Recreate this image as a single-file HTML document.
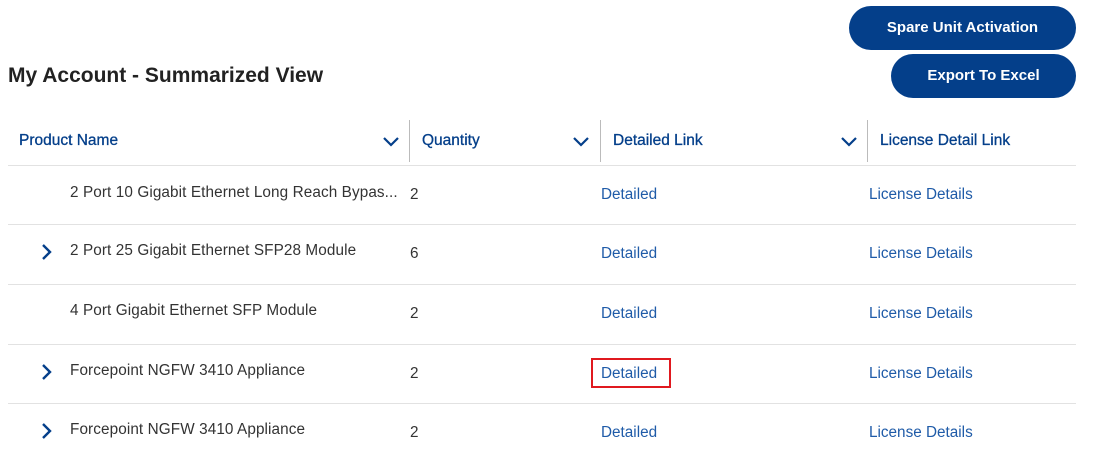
<!DOCTYPE html>
<html><head><style>
body{margin:0;width:1093px;height:459px;background:#fff;font-family:"Liberation Sans",sans-serif;position:relative;overflow:hidden}
.a{position:absolute;white-space:nowrap}
.btn{position:absolute;background:#043f8a;color:#fff;font-weight:bold;font-size:15px;border-radius:22px;text-align:center;line-height:44px;height:44px}
h1{position:absolute;left:8px;top:64px;margin:0;font-size:21px;font-weight:bold;color:#222}
.hd{font-size:15.5px;color:#043f8a;top:132px;-webkit-text-stroke:0.3px #043f8a}
.vl{position:absolute;top:120px;width:1px;height:42px;background:#bbb}
.hl{position:absolute;left:8px;width:1068px;height:1px;background:#e2e2e2}
.t{font-size:15.3px;color:#333}
.l{font-size:15.3px;color:#1f5ba8}
svg{position:absolute}
</style></head><body>
<div class="btn" style="left:849px;top:6px;width:227px">Spare Unit Activation</div>
<div class="btn" style="left:891px;top:54px;width:185px">Export To Excel</div>
<h1>My Account - Summarized View</h1>
<div class="a hd" style="left:19px">Product Name</div>
<div class="a hd" style="left:422px">Quantity</div>
<div class="a hd" style="left:613px">Detailed Link</div>
<div class="a hd" style="left:880px">License Detail Link</div>
<svg style="left:382px;top:135px" width="18" height="14"><path d="M2 3l7 7 7-7" stroke="#043f8a" stroke-width="2.2" fill="none"/></svg>
<svg style="left:572px;top:135px" width="18" height="14"><path d="M2 3l7 7 7-7" stroke="#043f8a" stroke-width="2.2" fill="none"/></svg>
<svg style="left:840px;top:135px" width="18" height="14"><path d="M2 3l7 7 7-7" stroke="#043f8a" stroke-width="2.2" fill="none"/></svg>
<div class="vl" style="left:409px"></div><div class="vl" style="left:600px"></div><div class="vl" style="left:867px"></div>
<div class="hl" style="top:165px"></div><div class="hl" style="top:224px"></div><div class="hl" style="top:284px"></div><div class="hl" style="top:344px"></div><div class="hl" style="top:403px"></div>

<div class="a t" style="left:70px;top:184px;letter-spacing:0.1px">2 Port 10 Gigabit Ethernet Long Reach Bypas...</div>
<div class="a t" style="left:410px;top:186px">2</div>
<div class="a l" style="left:601px;top:186px">Detailed</div>
<div class="a l" style="left:869px;top:186px">License Details</div>

<div class="a t" style="left:70px;top:242px;letter-spacing:0.1px">2 Port 25 Gigabit Ethernet SFP28 Module</div>
<div class="a t" style="left:410px;top:245px">6</div>
<div class="a l" style="left:601px;top:245px">Detailed</div>
<div class="a l" style="left:869px;top:245px">License Details</div>

<div class="a t" style="left:70px;top:302px;letter-spacing:0.1px">4 Port Gigabit Ethernet SFP Module</div>
<div class="a t" style="left:410px;top:305px">2</div>
<div class="a l" style="left:601px;top:305px">Detailed</div>
<div class="a l" style="left:869px;top:305px">License Details</div>

<div class="a t" style="left:70px;top:362px;letter-spacing:0.1px">Forcepoint NGFW 3410 Appliance</div>
<div class="a t" style="left:410px;top:365px">2</div>
<div class="a l" style="left:601px;top:365px">Detailed</div>
<div class="a l" style="left:869px;top:365px">License Details</div>
<div style="position:absolute;left:591px;top:358px;width:76px;height:26px;border:2px solid #e0191f"></div>

<div class="a t" style="left:70px;top:421px;letter-spacing:0.1px">Forcepoint NGFW 3410 Appliance</div>
<div class="a t" style="left:410px;top:424px">2</div>
<div class="a l" style="left:601px;top:424px">Detailed</div>
<div class="a l" style="left:869px;top:424px">License Details</div>

<svg style="left:40px;top:243px" width="14" height="18"><path d="M3 2l7 7-7 7" stroke="#043f8a" stroke-width="2.4" fill="none"/></svg>
<svg style="left:40px;top:363px" width="14" height="18"><path d="M3 2l7 7-7 7" stroke="#043f8a" stroke-width="2.4" fill="none"/></svg>
<svg style="left:40px;top:422px" width="14" height="18"><path d="M3 2l7 7-7 7" stroke="#043f8a" stroke-width="2.4" fill="none"/></svg>
</body></html>
